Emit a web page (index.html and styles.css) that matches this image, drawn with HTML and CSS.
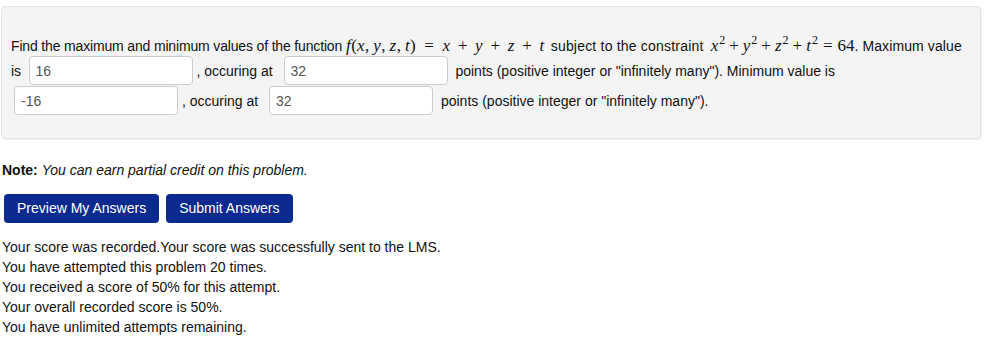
FILE: index.html
```html
<!DOCTYPE html>
<html>
<head>
<meta charset="utf-8">
<link rel="stylesheet" href="styles.css">
</head>
<body>
<div class="page">
  <div class="problem">
    <div class="line line-text"><span class="seg1">Find the maximum and minimum values of the function</span> <span class="math m1"><i>f</i>(<i>x</i>,<span class="c"></span><i>y</i>,<span class="c"></span><i>z</i>,<span class="c"></span><i>t</i>)<span class="op eq">=</span><i>x</i><span class="op">+</span><i>y</i><span class="op">+</span><i>z</i><span class="op">+</span><i>t</i></span><span class="seg2"> subject to the constraint </span><span class="math m2"><i>x</i><sup>2</sup><span class="op">+</span><i>y</i><sup>2</sup><span class="op">+</span><i>z</i><sup>2</sup><span class="op">+</span><i>t</i><sup>2</sup><span class="op eq">=</span>64</span><span class="tail">. Maximum value</span></div>
    <div class="line">is <input class="answer first" type="text" value="16"> , occuring at <input class="answer last" type="text" value="32"> points (positive integer or "infinitely many"). Minimum value is</div>
    <div class="line"><input class="answer" type="text" value="-16"> , occuring at <input class="answer last" type="text" value="32"> points (positive integer or "infinitely many").</div>
  </div>

  <p class="note"><b>Note:</b> <i>You can earn partial credit on this problem.</i></p>

  <div class="buttons">
    <button class="btn" type="button">Preview My Answers</button>
    <button class="btn" type="button">Submit Answers</button>
  </div>

  <div class="score">
    <div>Your score was recorded.Your score was successfully sent to the LMS.</div>
    <div>You have attempted this problem 20 times.</div>
    <div>You received a score of 50% for this attempt.</div>
    <div>Your overall recorded score is 50%.</div>
    <div>You have unlimited attempts remaining.</div>
  </div>
</div>
</body>
</html>
```

FILE: styles.css
```css
html, body {
  margin: 0;
  padding: 0;
  background: #ffffff;
}

body {
  font-family: "Liberation Sans", Arial, Helvetica, sans-serif;
  font-size: 14px;
  line-height: 20px;
  color: #111111;
}

.page {
  padding: 6px 3px 0 1px;
}

.problem {
  background: #f4f4f4;
  border: 1px solid #e3e3e3;
  border-radius: 4px;
  box-shadow: 1px 1px 1px rgba(0, 0, 0, 0.06);
  padding: 29px 9px 22px 9px;
}

.line {
  white-space: nowrap;
  line-height: 30px;
}

.line-text {
  line-height: 20px;
  height: 20px;
}

.seg1 {
  letter-spacing: -0.16px;
}

.seg2 {
  letter-spacing: 0.2px;
}

.tail {
  letter-spacing: 0.1px;
}

.math {
  font-family: "Liberation Serif", "DejaVu Serif", serif;
  font-size: 17px;
}

.math i {
  font-style: italic;
  padding-right: 0.5px;
}

.math .c {
  display: inline-block;
  width: 4px;
}

.math .op {
  display: inline-block;
  font-style: normal;
}

.m1 {
  margin-right: 2px;
}

.m1 .op {
  padding: 0 7.5px;
}

.m1 .op.eq {
  padding: 0 8.5px;
}

.m2 {
  margin-left: 3px;
}

.m2 .op {
  padding: 0 4px;
}

.m2 .op.eq {
  padding: 0 5px;
}

.math sup {
  font-size: 12px;
  line-height: 0;
  vertical-align: 7px;
  margin-left: 0.5px;
}

.answer {
  box-sizing: border-box;
  width: 164px;
  height: 29px;
  margin: -3px 0 0 3px;
  padding: 0 6px;
  border: 1px solid #cccccc;
  border-radius: 4px;
  background: #ffffff;
  font-family: "Liberation Sans", Arial, Helvetica, sans-serif;
  font-size: 14px;
  color: #555555;
  vertical-align: middle;
}

.answer.first {
  margin-left: 3.5px;
}

.answer.last {
  margin-left: 7px;
  margin-right: 4px;
}

.note {
  margin: 21px 0 0 0;
  padding-left: 1px;
  font-size: 14px;
  line-height: 20px;
}

.buttons {
  display: flex;
  gap: 7px;
  margin-top: 14px;
  padding-left: 3px;
}

.btn {
  height: 29px;
  padding: 0 13px;
  border: 0;
  border-radius: 4px;
  background: #0b2a90;
  color: #ffffff;
  font-family: "Liberation Sans", Arial, Helvetica, sans-serif;
  font-size: 14px;
  line-height: 29px;
}

.score {
  margin-top: 14px;
  padding-left: 1px;
}

.score div {
  line-height: 20px;
}
```
